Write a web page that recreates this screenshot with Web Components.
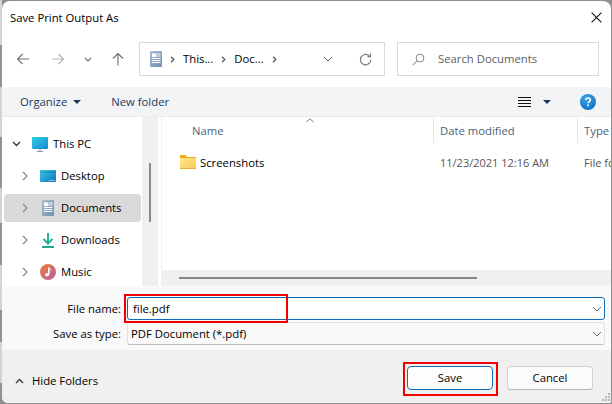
<!DOCTYPE html>
<html>
<head>
<meta charset="utf-8">
<style>
  html, body { margin: 0; padding: 0; background: #8f8f8f; }
  body {
    width: 612px; height: 404px; overflow: hidden;
    font: 11.3px "Open Sans", "Liberation Sans", sans-serif; color: #000;
    /* whatever lies behind the dialog shows through on the left edge */
    background: linear-gradient(#d4d4d4 0 45px, #929292 45px 87px, #d4d4d4 87px 137px, #929292 137px 188px, #d4d4d4 188px 223px, #929292 223px 265px, #d4d4d4 265px 310px, #929292 310px 342px, #d4d4d4 342px 383px, #929292 383px) no-repeat 0 0 / 2px 100%;
  }
</style>
</head>
<body>
<save-dialog></save-dialog>

<script>
const ICONS = {
  back: '<svg width="14" height="12" viewBox="0 0 14 12"><path d="M13 6H1.500M6.500 1 1.500 6l5 5" fill="none" stroke="#6f6f6f" stroke-width="1.100"/></svg>',
  forward: '<svg width="14" height="12" viewBox="0 0 14 12"><path d="M1 6h11.500M7.500 1l5 5-5 5" fill="none" stroke="#b4b4b4" stroke-width="1.100"/></svg>',
  down: '<svg width="8" height="5" viewBox="0 0 8 5"><path d="M1 1l3 3 3-3" fill="none" stroke="#6f6f6f" stroke-width="1.100"/></svg>',
  up: '<svg width="12" height="14" viewBox="0 0 12 14"><path d="M6 13.500V1.500M1 6.500l5-5 5 5" fill="none" stroke="#6a6a6a" stroke-width="1.100"/></svg>',
  crumb: '<svg width="5" height="7" viewBox="0 0 5 7"><path d="M1 .8 3.800 3.500 1 6.200" fill="none" stroke="#555" stroke-width="1.200"/></svg>',
  doc: '<svg width="12" height="16" viewBox="0 0 12 16"><defs><linearGradient id="d" x1="0" y1="0" x2="1" y2="1"><stop offset="0" stop-color="#a9bdd3"/><stop offset="1" stop-color="#6f8fb2"/></linearGradient></defs><rect width="12" height="16" rx="1" fill="url(#d)"/><path d="M2 2.500h4.500v3.500H2z" fill="#fff"/><path d="M7.500 3h3M7.500 5h3M2 7.500h8.500M2 9.500h8.500M2 11.500h8.500" stroke="#fff" fill="none"/></svg>',
  chevDown: '<svg width="10" height="6" viewBox="0 0 10 6"><path d="M1 1l4 4 4-4" fill="none" stroke="#666" stroke-width="1"/></svg>',
  refresh: '<svg width="13" height="13" viewBox="0 0 13 13"><path d="M11.800 6.800a5.200 5.200 0 1 1-1.700-4" fill="none" stroke="#777" stroke-width="1.200"/><path d="M11.500.6v3H8.500" fill="none" stroke="#777" stroke-width="1.200"/></svg>',
  search: '<svg width="13" height="13" viewBox="0 0 13 13"><circle cx="8" cy="5" r="3.900" fill="none" stroke="#8a8a8a" stroke-width="1"/><path d="M5.200 7.800.8 12.200" stroke="#b08aa8" stroke-width="1.100"/></svg>',
  close: '<svg width="11" height="11" viewBox="0 0 11 11"><path d="M.6.600l9.800 9.800M10.400.600.600 10.400" stroke="#111" stroke-width="1.100"/></svg>',
  caret: '<svg width="8" height="4" viewBox="0 0 8 4"><path d="M0 0h8L4 4z" fill="#1c3a5e"/></svg>',
  lines: '<svg width="13" height="11" viewBox="0 0 13 11"><path d="M0 .5h13M0 3.500h13M0 6.500h13M0 9.500h13" stroke="#111"/></svg>',
  help: '<svg width="16" height="16" viewBox="0 0 16 16"><defs><radialGradient id="h" cx=".4" cy=".3" r=".9"><stop offset="0" stop-color="#3aa3e8"/><stop offset="1" stop-color="#0a68c0"/></radialGradient></defs><circle cx="8" cy="8" r="8" fill="url(#h)"/><path d="M5.800 6.100c.1-1.300 1-2 2.300-2s2.200.8 2.200 1.900c0 1.600-2.100 1.700-2.100 3.300" fill="none" stroke="#fff" stroke-width="1.500"/><rect x="7.300" y="10.500" width="1.700" height="1.700" fill="#fff"/></svg>',
  expDown: '<svg width="9" height="6" viewBox="0 0 9 6"><path d="M1 1l3.500 3.500L8 1" fill="none" stroke="#333" stroke-width="1.300"/></svg>',
  expRight: '<svg width="6" height="10" viewBox="0 0 6 10"><path d="M1 1l4 4-4 4" fill="none" stroke="#8a8a8a" stroke-width="1.300"/></svg>',
  pc: '<svg width="16" height="15" viewBox="0 0 16 15"><defs><linearGradient id="p" x1="0" y1="0" x2="1" y2="1"><stop offset="0" stop-color="#30d0dc"/><stop offset="1" stop-color="#1a86d8"/></linearGradient></defs><rect width="16" height="12" rx="1" fill="url(#p)"/><path d="M8 12v2M5 14.500h6" stroke="#8a9aa8"/></svg>',
  desktop: '<svg width="16" height="12" viewBox="0 0 16 12"><defs><linearGradient id="k" x1="0" y1="0" x2="1" y2="1"><stop offset="0" stop-color="#36cde0"/><stop offset="1" stop-color="#1272c4"/></linearGradient></defs><path d="M1 0h14a1 1 0 0 1 1 1v10a1 1 0 0 1-1 1H1a1 1 0 0 1-1-1V1a1 1 0 0 1 1-1z" fill="url(#k)"/><path d="M0 2h16" stroke="#0c5c9c" stroke-opacity=".5"/><path d="M9.500 10.500h1M11.500 10.500h1M13.500 10.500h1" stroke="#fff"/></svg>',
  downloads: '<svg width="14" height="15" viewBox="0 0 14 15"><path d="M7 0v10" stroke="#1fb39a" stroke-width="2"/><path d="M2.500 6 7 10.500 11.500 6" fill="none" stroke="#1fb39a" stroke-width="2"/><path d="M1 14h12" stroke="#1fa88f" stroke-width="2"/></svg>',
  music: '<svg width="16" height="16" viewBox="0 0 16 16"><defs><linearGradient id="m" x1="0" y1="0" x2="1" y2="1"><stop offset="0" stop-color="#ed7e35"/><stop offset="1" stop-color="#b85fa8"/></linearGradient></defs><circle cx="8" cy="8" r="8" fill="url(#m)"/><path d="M8.800 3.500v7" stroke="#fff" stroke-width="1.500"/><ellipse cx="7" cy="10.800" rx="2" ry="1.700" fill="#fff"/><path d="M8.800 3.500c.3 1.500 2 1.500 2.200 3" stroke="#fff" fill="none"/></svg>',
  folder: '<svg width="16" height="14" viewBox="0 0 16 14"><defs><linearGradient id="f" x1="0" y1="0" x2="1" y2="1"><stop offset="0" stop-color="#ffe48a"/><stop offset="1" stop-color="#f8cc5a"/></linearGradient></defs><path d="M1 0h4.500l1.500 2h9v3H0V1a1 1 0 0 1 1-1z" fill="#eeac10"/><path d="M0 3h16v10a1 1 0 0 1-1 1H1a1 1 0 0 1-1-1z" fill="url(#f)"/><path d="M0 13.500h16" stroke="#e8b030"/></svg>',
  sortUp: '<svg width="8" height="5" viewBox="0 0 8 5"><path d="M.5 4 4 .8 7.500 4" fill="none" stroke="#777"/></svg>',
  hideUp: '<svg width="9" height="6" viewBox="0 0 9 6"><path d="M1 5l3.500-3.500L8 5" fill="none" stroke="#444" stroke-width="1.500"/></svg>',
  grip: '<svg width="9" height="9" viewBox="0 0 9 9" fill="#b8b8b8"><path d="M7 0h2v2H7zM4 3h2v2H4zM7 3h2v2H7zM1 6h2v2H1zM4 6h2v2H4zM7 6h2v2H7z"/></svg>'
};

class SaveIcon extends HTMLElement {
  constructor() {
    super();
    this.attachShadow({ mode: 'open' });
    this.shadowRoot.innerHTML = `
      <style>
        :host { display: inline-flex; align-items: center; justify-content: center; flex: none; }
        svg { display: block; }
      </style>
      ${ICONS[this.getAttribute('name')] || ''}
    `;
  }
}

class DialogTitle extends HTMLElement {
  constructor() {
    super();
    this.attachShadow({ mode: 'open' });
    this.shadowRoot.innerHTML = `
      <style>
        :host { display: flex; align-items: center; justify-content: space-between; height: 33px; margin-bottom: 8px; padding: 0 9px 0 8px; flex: none; }
        span { padding-bottom: 1px; }
      </style>
      <span><slot></slot></span>
      <save-icon name="close"></save-icon>
    `;
  }
}

class NavBar extends HTMLElement {
  constructor() {
    super();
    this.attachShadow({ mode: 'open' });
    this.shadowRoot.innerHTML = `
      <style>
        :host { display: flex; align-items: center; height: 34px; padding: 0 12px 0 14px; margin-bottom: 11px; flex: none; }
        .btns { display: grid; grid-template-columns: 35px 33px 28px 27px; align-items: center; flex: none; }
        .btns save-icon { justify-self: start; }
        .box { border: 1px solid #d9d9d9; height: 34px; box-sizing: border-box; display: flex; align-items: center; background: #fff; }
        .box span { padding-bottom: 2px; }
        .addr { width: 246px; margin-right: 12px; padding-left: 10px; flex: none; }
        .addr save-icon[name=crumb] { margin: 0 8px; }
        .spacer { flex: 1; }
        .search { flex: 1; padding-left: 14px; color: #5c5c5c; }
        .search save-icon { margin-right: 13px; }
        .chev { margin-right: 26px; }
        .ref { margin-right: 12px; }
      </style>
      <div class="btns">
        <save-icon name="back"></save-icon>
        <save-icon name="forward"></save-icon>
        <save-icon name="down"></save-icon>
        <save-icon name="up"></save-icon>
      </div>
      <div class="box addr">
        <save-icon name="doc"></save-icon>
        <save-icon name="crumb"></save-icon>
        <span>This...</span><save-icon name="crumb"></save-icon>
        <span>Doc...</span><save-icon name="crumb"></save-icon>
        <span class="spacer"></span>
        <save-icon class="chev" name="chevDown"></save-icon>
        <save-icon class="ref" name="refresh"></save-icon>
      </div>
      <div class="box search">
        <save-icon name="search"></save-icon>
        <span>Search Documents</span>
      </div>
    `;
  }
}

class ToolBar extends HTMLElement {
  constructor() {
    super();
    this.attachShadow({ mode: 'open' });
    this.shadowRoot.innerHTML = `
      <style>
        :host { display: flex; align-items: center; height: 30px; background: #f3f4f6; box-shadow: inset 0 -1px #e9eaec; padding: 0 15px 0 18px; color: #1c3a5e; flex: none; }
        span { padding-bottom: 2px; }
        .org { margin-right: 6px; }
        .new { margin-left: 30px; flex: 1; }
        .caret2 { margin: 0 29px 0 12px; }
      </style>
      <span class="org">Organize</span>
      <save-icon name="caret"></save-icon>
      <span class="new">New folder</span>
      <save-icon name="lines"></save-icon>
      <save-icon class="caret2" name="caret"></save-icon>
      <save-icon name="help"></save-icon>
    `;
  }
}

class TreeRow extends HTMLElement {
  constructor() {
    super();
    this.attachShadow({ mode: 'open' });
    const top = this.hasAttribute('top');
    this.shadowRoot.innerHTML = `
      <style>
        :host { display: flex; align-items: center; height: 28px; margin: 0 1px 4px 2px; border-radius: 4px; flex: none; padding-left: ${top ? 8 : 18}px; }
        :host([selected]) { background: #d9d9d9; }
        span { padding-bottom: 2px; }
        .exp { width: 12px; margin-right: ${top ? 7 : 5}px; justify-content: flex-start; }
        .ic { width: 18px; margin-right: 4px; }
      </style>
      <save-icon class="exp" name="${top ? 'expDown' : 'expRight'}"></save-icon>
      <save-icon class="ic" name="${this.getAttribute('icon')}"></save-icon>
      <span><slot></slot></span>
    `;
  }
}

class NavPane extends HTMLElement {
  constructor() {
    super();
    this.attachShadow({ mode: 'open' });
    this.shadowRoot.innerHTML = `
      <style>
        :host { display: flex; width: 159px; flex: none; height: 100%; overflow: hidden; }
        .rows { width: 140px; padding-top: 13px; display: flex; flex-direction: column; flex: none; box-sizing: border-box; overflow: hidden; }
        .track { width: 16px; background: #f0f0f0; display: flex; justify-content: center; padding-top: 46px; box-sizing: border-box; flex: none; }
        .track i { display: block; width: 2px; height: 59px; background: #8a8a8a; }
      </style>
      <div class="rows"><slot></slot></div>
      <div class="track"><i></i></div>
    `;
  }
}

class FileList extends HTMLElement {
  constructor() {
    super();
    this.attachShadow({ mode: 'open' });
    this.shadowRoot.innerHTML = `
      <style>
        :host { display: flex; flex-direction: column; flex: 1; min-width: 0; height: 100%; position: relative; overflow: hidden; border-left: 1px solid #f0f0f0; box-sizing: border-box; }
        .head { display: grid; grid-template-columns: 272px 144px 1fr; height: 28px; color: #4c607a; flex: none; }
        .head span { padding-left: 6px; display: flex; align-items: center; height: 26px; border-right: 1px solid #e5e5e5; box-sizing: border-box; }
        .head span:first-child { padding-left: 30px; }
        .head span:last-child { border: 0; }
        .sort { position: absolute; left: 144px; top: 1px; }
        .row { display: grid; grid-template-columns: 272px 144px 1fr; height: 28px; align-items: center; flex: none; margin-top: 4px; white-space: nowrap; }
        .row > div { padding-left: 6px; padding-bottom: 2px; overflow: hidden; font-size: 11px; color: #555; }
        .row > .name { padding-left: 18px; display: flex; align-items: center; gap: 4px; font-size: 11.3px; color: #000; }
        .name save-icon { margin-top: -1px; }
        .space { flex: 1; }
        .hbar { height: 16px; background: #f0f0f0; display: flex; align-items: center; padding-left: 17px; flex: none; }
        .hbar i { display: block; width: 298px; height: 2px; background: #858585; }
      </style>
      <div class="head"><span>Name</span><span>Date modified</span><span>Type</span></div>
      <save-icon class="sort" name="sortUp"></save-icon>
      <div class="row">
        <div class="name"><save-icon name="folder"></save-icon>Screenshots</div>
        <div>11/23/2021 12:16 AM</div>
        <div>File folder</div>
      </div>
      <div class="space"></div>
      <div class="hbar"><i></i></div>
    `;
  }
}

class FormField extends HTMLElement {
  constructor() {
    super();
    this.attachShadow({ mode: 'open' });
    const focus = this.hasAttribute('focus');
    this.shadowRoot.innerHTML = `
      <style>
        :host { display: flex; align-items: center; height: 23px; }
        label { width: 119px; text-align: right; flex: none; margin-right: 6px; white-space: nowrap; }
        .input { flex: 1; height: 100%; box-sizing: border-box; display: flex; align-items: center; justify-content: space-between; padding: 0 2px 0 ${focus ? 5 : 3}px; background: ${focus ? '#fff' : '#f9f9f9'}; border: 1px solid ${focus ? '#0f6cbd' : '#e2e2e2'}; border-bottom-color: ${focus ? '#0f6cbd' : '#bdbdbd'}; border-radius: 3px; }
        .input span { padding-bottom: 1px; }
      </style>
      <label>${this.getAttribute('label')}</label>
      <div class="input"><span><slot></slot></span><save-icon name="chevDown"></save-icon></div>
    `;
  }
}

class SaveForm extends HTMLElement {
  constructor() {
    super();
    this.attachShadow({ mode: 'open' });
    this.shadowRoot.innerHTML = `
      <style>
        :host { display: flex; flex-direction: column; gap: 2px; height: 64px; background: #f9f9f9; padding: 11px 6px 0 0; box-sizing: border-box; position: relative; flex: none; }
        .mark { position: absolute; left: 122px; top: 8px; width: 164px; height: 29px; border: 2px solid #f00000; box-sizing: border-box; }
      </style>
      <slot></slot>
      <div class="mark"></div>
    `;
  }
}

class DlgButton extends HTMLElement {
  constructor() {
    super();
    this.attachShadow({ mode: 'open' });
    this.shadowRoot.innerHTML = `
      <style>
        :host { display: flex; align-items: center; justify-content: center; width: 86px; height: 24px; box-sizing: border-box; padding-bottom: 2px; border: 1px solid #d0d0d0; border-bottom-color: #b4b4b4; border-radius: 4px; background: #fbfbfb; flex: none; }
        :host([primary]) { border-color: #0f6cbd; background: #fdfdfd; }
      </style>
      <slot></slot>
    `;
  }
}

class SaveFooter extends HTMLElement {
  constructor() {
    super();
    this.attachShadow({ mode: 'open' });
    this.shadowRoot.innerHTML = `
      <style>
        :host { display: flex; align-items: flex-start; flex: 1; background: #f0f0f0; padding: 16px 18px 0 13px; position: relative; }
        .hide { display: flex; align-items: center; gap: 8px; flex: 1; margin-top: 7px; }
        .mark { position: absolute; left: 401px; top: 12px; width: 95px; height: 34px; border: 2px solid #f00000; box-sizing: border-box; }
        .grip { position: absolute; right: 1px; bottom: 1px; }
      </style>
      <div class="hide"><save-icon name="hideUp"></save-icon><span>Hide Folders</span></div>
      <slot></slot>
      <div class="mark"></div>
      <save-icon class="grip" name="grip"></save-icon>
    `;
  }
}

class SaveDialog extends HTMLElement {
  constructor() {
    super();
    this.attachShadow({ mode: 'open' });
    this.shadowRoot.innerHTML = `
      <style>
        :host { display: flex; flex-direction: column; width: 609px; height: 402px; margin: 1px 0 0 2px; background: #fff; border-radius: 8px 8px 0 6px; overflow: hidden; }
        .main { display: flex; height: 169px; flex: none; }
        .btns { display: flex; gap: 14px; }
      </style>
      <dialog-title>Save Print Output As</dialog-title>
      <nav-bar></nav-bar>
      <tool-bar></tool-bar>
      <div class="main">
        <nav-pane>
          <tree-row top icon="pc">This PC</tree-row>
          <tree-row icon="desktop">Desktop</tree-row>
          <tree-row selected icon="doc">Documents</tree-row>
          <tree-row icon="downloads">Downloads</tree-row>
          <tree-row icon="music">Music</tree-row>
        </nav-pane>
        <file-list></file-list>
      </div>
      <save-form>
        <form-field label="File name:" focus>file.pdf</form-field>
        <form-field label="Save as type:">PDF Document (*.pdf)</form-field>
      </save-form>
      <save-footer>
        <div class="btns">
          <dlg-button primary>Save</dlg-button>
          <dlg-button>Cancel</dlg-button>
        </div>
      </save-footer>
    `;
  }
}

customElements.define('save-icon', SaveIcon);
customElements.define('dialog-title', DialogTitle);
customElements.define('nav-bar', NavBar);
customElements.define('tool-bar', ToolBar);
customElements.define('tree-row', TreeRow);
customElements.define('nav-pane', NavPane);
customElements.define('file-list', FileList);
customElements.define('form-field', FormField);
customElements.define('save-form', SaveForm);
customElements.define('dlg-button', DlgButton);
customElements.define('save-footer', SaveFooter);
customElements.define('save-dialog', SaveDialog);
</script>
</body>
</html>
